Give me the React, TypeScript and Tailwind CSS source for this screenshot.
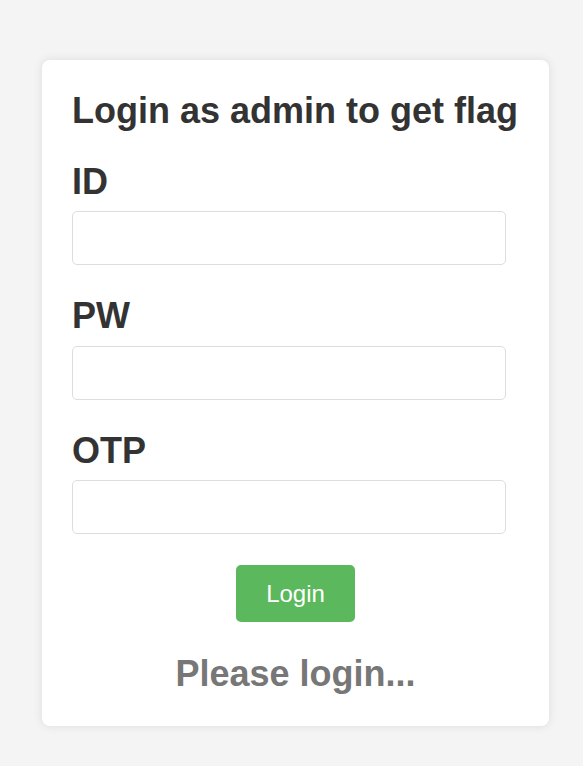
import React from "react";

export default function App() {
  const font = { fontFamily: '"Liberation Sans", Arial, sans-serif' };
  return (
    <div className="min-h-[766px] w-full bg-[#f4f4f4] pt-[60px]" style={font}>
      <div className="ml-[42px] w-[507px] rounded-[8px] bg-white px-[30px] pt-[30px] pb-[31px] shadow-[0_0_10px_rgba(0,0,0,0.1)]">
        <h2 className="m-0 text-[36px] font-bold leading-[42px] text-[#333] whitespace-nowrap">
          Login as admin to get flag
        </h2>
        <div className="mt-[29px]">
          <label className="block text-[36px] font-bold leading-[42px] text-[#333]">ID</label>
          <input className="mt-[8px] block h-[54px] w-[434px] rounded-[5px] border border-[#ddd] bg-white px-[10px] outline-none" />
        </div>
        <div className="mt-[30px]">
          <label className="block text-[36px] font-bold leading-[42px] text-[#333]">PW</label>
          <input className="mt-[9px] block h-[54px] w-[434px] rounded-[5px] border border-[#ddd] bg-white px-[10px] outline-none" />
        </div>
        <div className="mt-[30px]">
          <label className="block text-[36px] font-bold leading-[42px] text-[#333]">OTP</label>
          <input className="mt-[8px] block h-[54px] w-[434px] rounded-[5px] border border-[#ddd] bg-white px-[10px] outline-none" />
        </div>
        <div className="mt-[31px] flex justify-center">
          <button className="h-[57px] w-[119px] rounded-[5px] bg-[#5cb85c] text-[24px] leading-[28px] text-white">
            Login
          </button>
        </div>
        <div className="mt-[31px] text-center text-[36px] font-bold leading-[42px] text-[#777]">
          Please login...
        </div>
      </div>
    </div>
  );
}
